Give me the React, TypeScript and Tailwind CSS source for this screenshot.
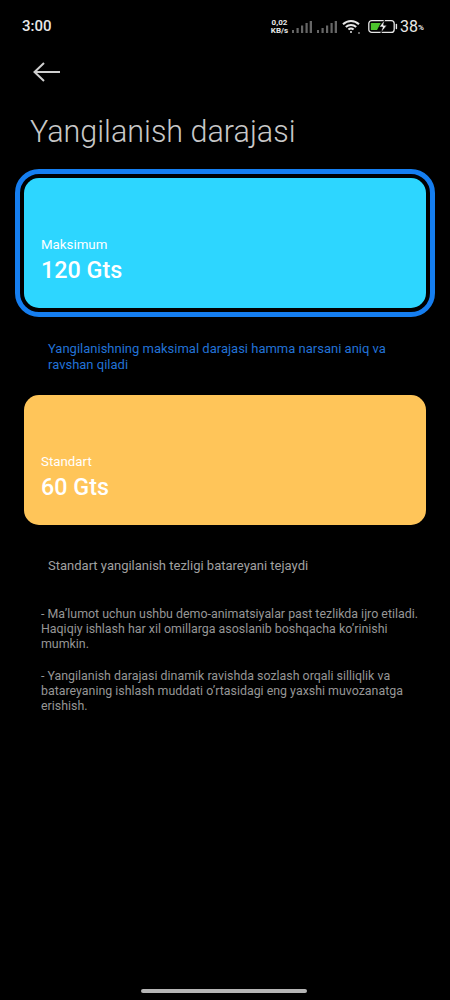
const font = { fontFamily: 'Roboto, sans-serif' }

function SignalBars() {
    return (
        <svg width="20" height="14" viewBox="0 0 20 14" fill="#666666">
            <rect x="0" y="10" width="2" height="3" />
            <rect x="4.5" y="8" width="2.2" height="5" />
            <rect x="9" y="5.5" width="2.2" height="7.5" />
            <rect x="13.5" y="3" width="2.2" height="10" />
            <rect x="17.7" y="1" width="2.3" height="12" />
        </svg>
    )
}

function Wifi() {
    return (
        <svg width="19" height="15" viewBox="0 0 19 15" fill="none" stroke="#e6e6e6" strokeWidth="2">
            <path d="M1 5.2c4.6-4.4 11.4-4.4 16 0" />
            <path d="M3.8 8c3-2.8 7.4-2.8 10.4 0" />
            <path d="M6.4 10.6c1.6-1.4 3.6-1.4 5.2 0" />
            <circle cx="9" cy="13" r="1" fill="#e6e6e6" stroke="none" />
            <circle cx="17" cy="14" r="0.8" fill="#e6e6e6" stroke="none" />
        </svg>
    )
}

function Battery() {
    return (
        <svg width="30" height="15" viewBox="0 0 30 15" fill="none">
            <rect x="0.8" y="1.6" width="25.4" height="11.8" rx="3" stroke="#e6e6e6" strokeWidth="1.3" />
            <path d="M3.4 4h9.4L9 11H3.4a.6.6 0 0 1-.6-.6V4.6a.6.6 0 0 1 .6-.6z" fill="#4cc42c" />
            <path d="M16.5 1 11.2 8h3.3l-1.6 6 6-7.8h-3.3z" fill="#f4f4f4" stroke="#000" strokeWidth="0.7" />
            <path d="M28.4 5.5v4" stroke="#e6e6e6" strokeWidth="1.4" strokeLinecap="round" />
        </svg>
    )
}

function StatusBar() {
    return (
        <div className="flex h-[52px] items-center justify-between pl-[22px] pr-[26px] pt-[1px] text-[#e8e8e8]">
            <span className="text-[15px] font-medium">3:00</span>
            <div className="flex items-center">
                <div className="mr-[4px] flex flex-col items-center text-[8px] font-bold leading-[8px]">
                    <span>0,02</span>
                    <span>KB/s</span>
                </div>
                <SignalBars />
                <div className="w-[5px]" />
                <SignalBars />
                <div className="ml-[5px] mr-[7px]">
                    <Wifi />
                </div>
                <Battery />
                <span className="ml-[2px] text-[16px]">38</span>
                <span className="mt-[3px] text-[8px] font-bold">%</span>
            </div>
        </div>
    )
}

function RateCard({ label, rate, color }: { label: string; rate: string; color: string }) {
    return (
        <div className={`flex h-[130px] flex-col justify-end rounded-[15px] pb-[24px] pl-[17px] text-white ${color}`}>
            <span className="text-[13.3px] leading-[18px]">{label}</span>
            <span className="mt-[2px] text-[23.3px] font-medium leading-[28px]">{rate}</span>
        </div>
    )
}

export default function App() {
    return (
        <div className="relative h-[1000px] w-[450px] overflow-hidden bg-black" style={font}>
            <StatusBar />

            <div className="pl-[32px] pt-[8px]">
                <svg width="29" height="24" viewBox="0 0 29 24" fill="none" stroke="#cfcfcf" strokeWidth="2">
                    <path d="M28 12H3" />
                    <path d="M12 3 2.5 12l9.5 9" />
                </svg>
            </div>

            <h1 className="mt-[28px] pl-[30px] text-[30.5px] font-light leading-[40px] text-[#c8c8c8]">
                Yangilanish darajasi
            </h1>

            <div className="mx-[15px] mt-[17px] rounded-[24px] border-[5px] border-[#157ef0] p-[4px]">
                <RateCard label="Maksimum" rate="120 Gts" color="bg-[#2dd6ff]" />
            </div>

            <p className="mt-[24px] pl-[48px] pr-[50px] text-[13px] leading-[16px] text-[#2272d6]">
                Yangilanishning maksimal darajasi hamma narsani aniq va ravshan qiladi
            </p>

            <div className="mx-[24px] mt-[22px]">
                <RateCard label="Standart" rate="60 Gts" color="bg-[#ffc559]" />
            </div>

            <p className="mt-[32px] pl-[48px] text-[13px] leading-[18px] text-[#a0a0a0]">
                Standart yangilanish tezligi batareyani tejaydi
            </p>

            <div className="mt-[32px] space-y-[18px] pl-[41px] pr-[20px] text-[12.4px] leading-[14.75px] text-[#969696]">
                <p>
                    - Ma’lumot uchun ushbu demo-animatsiyalar past tezlikda ijro etiladi. Haqiqiy ishlash har xil omillarga asoslanib boshqacha ko’rinishi mumkin.
                </p>
                <p>
                    - Yangilanish darajasi dinamik ravishda sozlash orqali silliqlik va batareyaning ishlash muddati o’rtasidagi eng yaxshi muvozanatga erishish.
                </p>
            </div>

            <div className="absolute bottom-[7px] left-[141px] h-[4px] w-[166px] rounded-full bg-[#b5b5b5]" />
        </div>
    )
}
